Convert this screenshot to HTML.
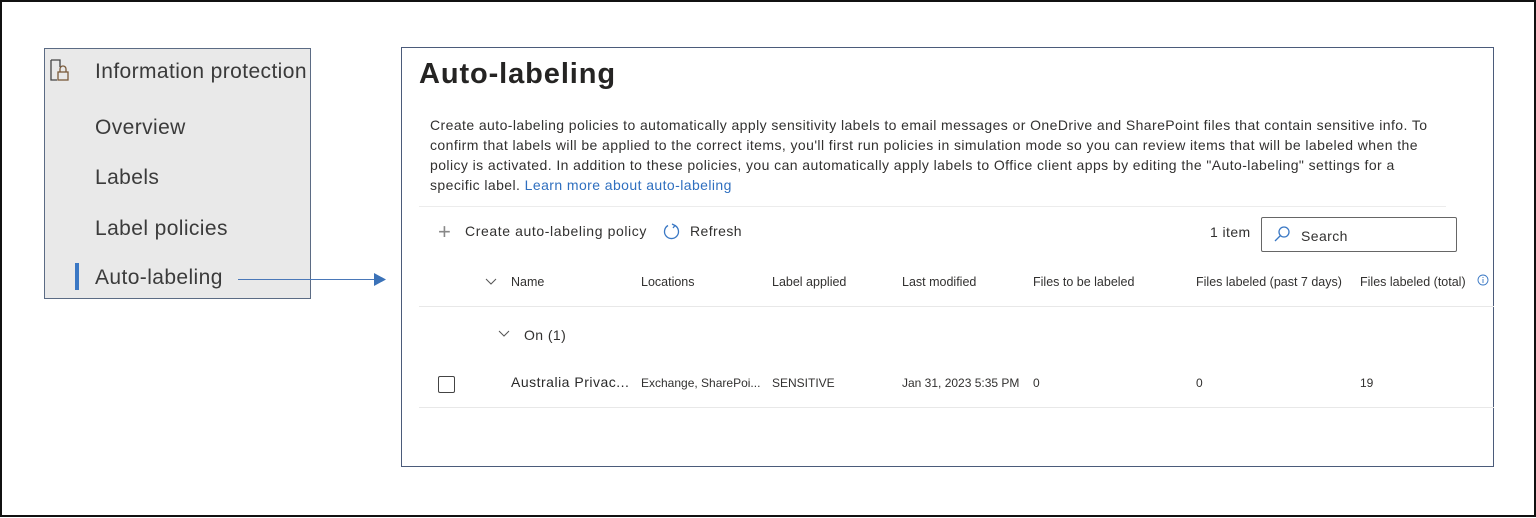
<!DOCTYPE html>
<html><head><style>
*{margin:0;padding:0;box-sizing:border-box}
body{width:1536px;height:518px;background:#fff;font-family:"Liberation Sans",sans-serif;position:relative;overflow:hidden;color:#323130}
.a{position:absolute;white-space:nowrap}
#outer{position:absolute;left:0;top:0;width:1536px;height:517px;border:2px solid #111}
#left{position:absolute;left:44px;top:48px;width:267px;height:251px;background:#e9e9e9;border:1px solid #5b6b84}
.nav{font-size:21px;color:#3b3b3b;letter-spacing:0.4px}
#right{position:absolute;left:401px;top:47px;width:1093px;height:420px;border:1px solid #4b5b7a;background:#fff}
.p{font-size:14px;color:#323130;line-height:20px;letter-spacing:0.42px}
.h{font-size:12.5px;color:#323130}
.line{position:absolute;height:1px;background:#e8e8e8}
</style></head><body>
<div id="outer"></div>
<div id="left">
  <svg class="a" style="left:4px;top:10px" width="24" height="24" viewBox="0 0 24 24" fill="none" stroke="#444" stroke-width="1.3"><path d="M2 1h9v7M2 1v20h6"/><rect x="9" y="13" width="10" height="8" stroke="#7a5a3a"/><path d="M11 13v-3a3 3 0 0 1 6 0v3" stroke="#7a5a3a"/></svg>
  <div class="a nav" style="left:50px;top:11px;color:#3a3a3a">Information protection</div>
  <div class="a nav" style="left:50px;top:67px">Overview</div>
  <div class="a nav" style="left:50px;top:117px">Labels</div>
  <div class="a nav" style="left:50px;top:168px">Label policies</div>
  <div class="a" style="left:30px;top:214px;width:4px;height:27px;background:#3b78c4"></div>
  <div class="a nav" style="left:50px;top:217px">Auto-labeling</div>
</div>
<div class="a" style="left:238px;top:279px;width:138px;height:1px;background:#4a78b8"></div>
<svg class="a" style="left:374px;top:273px" width="12" height="13"><path d="M0 0L12 6.5L0 13z" fill="#3b72b8"/></svg>
<div id="right">
  <div class="a" style="left:17px;top:10px;font-size:29px;font-weight:bold;color:#252423;letter-spacing:0.9px">Auto-labeling</div>
  <div class="a p" style="left:28px;top:67px">Create auto-labeling policies to automatically apply sensitivity labels to email messages or OneDrive and SharePoint files that contain sensitive info. To<br>confirm that labels will be applied to the correct items, you'll first run policies in simulation mode so you can review items that will be labeled when the<br>policy is activated. In addition to these policies, you can automatically apply labels to Office client apps by editing the "Auto-labeling" settings for a<br>specific label. <span style="color:#2f6fbf">Learn more about auto-labeling</span></div>
  <div class="line" style="left:17px;top:158px;width:1027px;background:#ececec"></div>
  <div class="a" style="left:36px;top:171px;font-size:22px;color:#888;font-weight:300">+</div>
  <div class="a p" style="left:63px;top:173px;letter-spacing:0.6px">Create auto-labeling policy</div>
  <svg class="a" style="left:261px;top:174px" width="18" height="18" fill="none" stroke="#3a78c4" stroke-width="1.3"><path d="M12 3.5A7 7 0 1 1 5 3.5"/><path d="M9 2L12 3.5L10 6"/></svg>
  <div class="a p" style="left:288px;top:173px">Refresh</div>
  <div class="a p" style="left:808px;top:174px">1 item</div>
  <div class="a" style="left:859px;top:169px;width:196px;height:35px;border:1.5px solid #666;border-radius:2px"></div>
  <svg class="a" style="left:871px;top:177px" width="18" height="18" fill="none" stroke="#3a78c4" stroke-width="1.3"><circle cx="11" cy="7" r="5"/><path d="M7.5 10.5L2 16"/></svg>
  <div class="a p" style="left:899px;top:178px">Search</div>
  <svg class="a" style="left:83px;top:230px" width="12" height="8" fill="none" stroke="#555" stroke-width="1"><path d="M1 1l5 5 5-5"/></svg>
  <div class="a h" style="left:109px;top:227px">Name</div>
  <div class="a h" style="left:239px;top:227px">Locations</div>
  <div class="a h" style="left:370px;top:227px">Label applied</div>
  <div class="a h" style="left:500px;top:227px">Last modified</div>
  <div class="a h" style="left:631px;top:227px">Files to be labeled</div>
  <div class="a h" style="left:794px;top:227px">Files labeled (past 7 days)</div>
  <div class="a h" style="left:958px;top:227px">Files labeled (total)</div>
  <svg class="a" style="left:1075px;top:226px" width="12" height="12" fill="none" stroke="#3a78c4" stroke-width="0.9"><circle cx="6" cy="6" r="5"/><path d="M6 5v4M6 3v1"/></svg>
  <div class="line" style="left:17px;top:258px;width:1075px"></div>
  <svg class="a" style="left:96px;top:282px" width="12" height="8" fill="none" stroke="#555" stroke-width="1"><path d="M1 1l5 5 5-5"/></svg>
  <div class="a p" style="left:122px;top:277px">On (1)</div>
  <div class="a" style="left:36px;top:328px;width:17px;height:17px;border:1.3px solid #444;border-radius:2px"></div>
  <div class="a" style="left:109px;top:326px;font-size:14px;letter-spacing:0.5px;color:#2a2a2a">Australia Privac...</div>
  <div class="a h" style="left:239px;top:328px;font-size:12px">Exchange, SharePoi...</div>
  <div class="a h" style="left:370px;top:328px;font-size:12px">SENSITIVE</div>
  <div class="a h" style="left:500px;top:328px;font-size:12px">Jan 31, 2023 5:35 PM</div>
  <div class="a h" style="left:631px;top:328px;font-size:12px">0</div>
  <div class="a h" style="left:794px;top:328px;font-size:12px">0</div>
  <div class="a h" style="left:958px;top:328px;font-size:12px">19</div>
  <div class="line" style="left:17px;top:359px;width:1075px"></div>
</div>
</body></html>
